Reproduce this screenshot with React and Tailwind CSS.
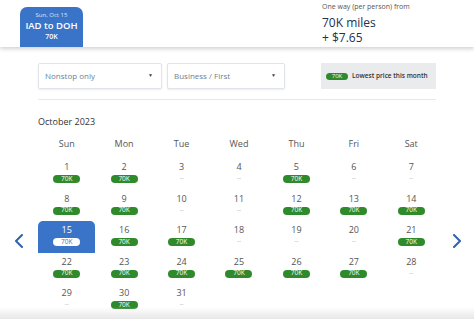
import React from 'react';

const priced = [1, 2, 5, 8, 9, 12, 13, 14, 15, 16, 17, 21, 22, 23, 24, 25, 26, 27, 30];
const days = ['Sun', 'Mon', 'Tue', 'Wed', 'Thu', 'Fri', 'Sat'];

const Chevron = ({ dir }) => (
  <svg width="10" height="14" viewBox="0 0 10 14" fill="none">
    <path
      d={dir === 'left' ? 'M8 1 L2 7 L8 13' : 'M2 1 L8 7 L2 13'}
      stroke="#2f63b0"
      strokeWidth="2"
      strokeLinecap="round"
      strokeLinejoin="round"
    />
  </svg>
);

const Select = ({ label, width }) => (
  <div className={`${width} h-[26px] flex items-center justify-between pl-[6px] pr-[8px] bg-white border border-[#e1e4e8] rounded-[2px] shadow-[0_1px_2px_rgba(0,0,0,0.08)]`}>
    <span className="text-[8px] text-[#6e7f93]">{label}</span>
    <span className="text-[5px] text-[#444]">▼</span>
  </div>
);

const DayCell = ({ day }) => {
  const selected = day === 15;
  const hasPrice = priced.includes(day);
  return (
    <div className={`h-[31.5px] flex flex-col items-center pt-[3px] ${selected ? 'bg-[#3a74c8] rounded-t-[5px]' : ''}`}>
      <span className={`text-[9px] leading-[12px] ${selected ? 'text-white' : 'text-[#555]'}`}>{day}</span>
      {hasPrice ? (
        <span
          className={`mt-[2px] w-[27px] h-[8px] rounded-full flex items-center justify-center text-[6.5px] leading-none ${
            selected ? 'bg-white text-[#3a74c8]' : 'bg-[#2f8a2c] text-white'
          }`}
        >
          70K
        </span>
      ) : (
        <span className="mt-[1px] text-[6px] leading-[8px] text-[#999]">--</span>
      )}
    </div>
  );
};

export default function App() {
  const cells = Array.from({ length: 31 }, (_, i) => i + 1);

  return (
    <div className="relative w-[474px] h-[319px] overflow-hidden bg-white font-['Open_Sans',sans-serif]">
      {/* header */}
      <div className="relative z-10 h-[47px] flex bg-white shadow-[0_2px_4px_rgba(0,0,0,0.18)]">
        <div className="ml-[20px] mt-[7px] w-[63px] h-[40px] rounded-t-[7px] bg-[#3a74c8] flex flex-col items-center pt-[4px]">
          <span className="text-[6px] leading-[9px] text-[#dbe6f6]">Sun, Oct 15</span>
          <span className="text-[9.5px] leading-[12px] font-semibold text-white">IAD to DOH</span>
          <span className="text-[7px] leading-[10px] font-semibold text-white">70K</span>
        </div>
        <div className="ml-[239px] pt-[2px] flex flex-col">
          <span className="text-[7px] leading-[10px] text-[#555]">One way (per person) from</span>
          <span className="mt-[3px] text-[12px] leading-[15px] text-[#24304d]">70K miles</span>
          <span className="text-[12px] leading-[15px] text-[#24304d]">+ $7.65</span>
        </div>
      </div>

      {/* filters */}
      <div className="mx-[38px] mt-[16px] flex items-center">
        <Select label="Nonstop only" width="w-[124px]" />
        <div className="ml-[5px]">
          <Select label="Business / First" width="w-[118px]" />
        </div>
        <div className="ml-auto w-[115px] h-[26px] bg-[#e9ebed] flex items-center pl-[5px]">
          <span className="w-[22px] h-[7px] rounded-full bg-[#2f8a2c] text-white text-[6px] leading-none flex items-center justify-center">70K</span>
          <span className="ml-[4px] text-[6.5px] font-semibold text-[#333]">Lowest price this month</span>
        </div>
      </div>
      <div className="mx-[38px] mt-[10px] h-[1px] bg-[#e6e8ea]" />

      {/* calendar */}
      <div className="mx-[38px] mt-[16px] text-[9px] leading-[12px] text-[#333]">October 2023</div>

      <div className="flex mt-[2px]">
        <div className="w-[38px] flex justify-center pt-[104px]">
          <Chevron dir="left" />
        </div>
        <div className="w-[402px]">
          <div className="grid grid-cols-7 h-[28px] pt-[8px]">
            {days.map((d) => (
              <span key={d} className="text-center text-[9px] leading-[12px] text-[#555]">{d}</span>
            ))}
          </div>
          <div className="grid grid-cols-7">
            {cells.map((d) => (
              <DayCell key={d} day={d} />
            ))}
          </div>
        </div>
        <div className="w-[34px] flex justify-center pt-[104px]">
          <Chevron dir="right" />
        </div>
      </div>

      {/* bottom fade */}
      <div className="absolute bottom-0 left-0 right-0 h-[12px] bg-gradient-to-b from-transparent to-[#e7e7e7] pointer-events-none" />
    </div>
  );
}
